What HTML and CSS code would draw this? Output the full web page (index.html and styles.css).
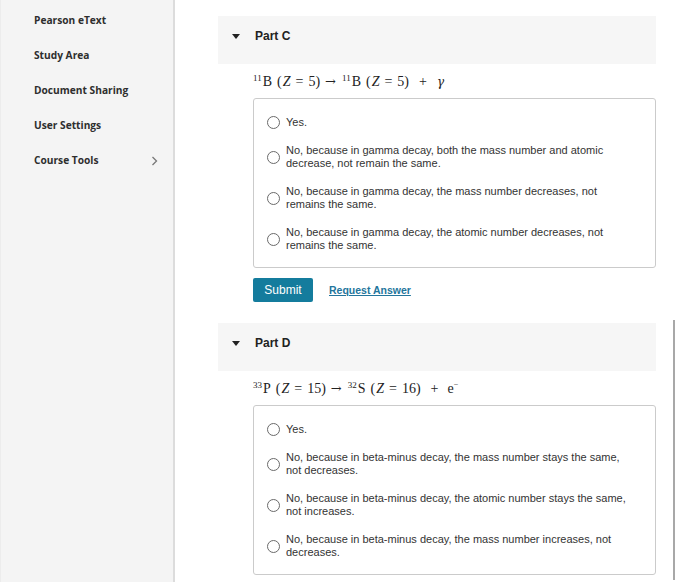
FILE: index.html
```html
<!DOCTYPE html>
<html>
<head>
<meta charset="utf-8">
<link rel="stylesheet" href="styles.css">
</head>
<body>
<div class="page">
  <nav class="sidebar">
    <div class="nav-item">Pearson eText</div>
    <div class="nav-item">Study Area</div>
    <div class="nav-item">Document Sharing</div>
    <div class="nav-item">User Settings</div>
    <div class="nav-item">Course Tools
      <svg class="chev" width="7" height="10" viewBox="0 0 7 10"><polyline points="1.5,1 5.5,5 1.5,9" fill="none" stroke="#777" stroke-width="1.3"/></svg>
    </div>
  </nav>
  <main class="main">
    <section class="part">
      <div class="part-head">
        <span class="caret"></span>
        <span class="part-title">Part C</span>
      </div>
      <div class="eq">
        <sup>11</sup>B<span class="s5"></span>(<i>Z</i><span class="rel">=</span>5)<span class="arr">→</span><sup>11</sup>B<span class="s5"></span>(<i>Z</i><span class="rel">=</span>5)<span class="bin">+</span><i class="gamma">γ</i>
      </div>
      <div class="options">
        <div class="opt"><span class="radio"></span><span class="opt-text">Yes.</span></div>
        <div class="opt"><span class="radio"></span><span class="opt-text">No, because in gamma decay, both the mass number and atomic<br>decrease, not remain the same.</span></div>
        <div class="opt"><span class="radio"></span><span class="opt-text">No, because in gamma decay, the mass number decreases, not<br>remains the same.</span></div>
        <div class="opt"><span class="radio"></span><span class="opt-text">No, because in gamma decay, the atomic number decreases, not<br>remains the same.</span></div>
      </div>
      <div class="actions">
        <button class="submit">Submit</button>
        <a class="request">Request Answer</a>
      </div>
    </section>
    <section class="part part-d">
      <div class="part-head">
        <span class="caret"></span>
        <span class="part-title">Part D</span>
      </div>
      <div class="eq">
        <sup>33</sup>P<span class="s5"></span>(<i>Z</i><span class="rel">=</span>15)<span class="arr">→</span><sup>32</sup>S<span class="s5"></span>(<i>Z</i><span class="rel">=</span>16)<span class="bin">+</span>e<sup class="minus">−</sup>
      </div>
      <div class="options">
        <div class="opt"><span class="radio"></span><span class="opt-text">Yes.</span></div>
        <div class="opt"><span class="radio"></span><span class="opt-text">No, because in beta-minus decay, the mass number stays the same,<br>not decreases.</span></div>
        <div class="opt"><span class="radio"></span><span class="opt-text">No, because in beta-minus decay, the atomic number stays the same,<br>not increases.</span></div>
        <div class="opt"><span class="radio"></span><span class="opt-text">No, because in beta-minus decay, the mass number increases, not<br>decreases.</span></div>
      </div>
    </section>
  </main>
  <div class="scrollbar"></div>
</div>
</body>
</html>
```

FILE: styles.css
```css
html, body {
  margin: 0;
  padding: 0;
  background: #fff;
}
.page {
  position: relative;
  display: flex;
  width: 700px;
  height: 582px;
  overflow: hidden;
}
.sidebar {
  width: 172px;
  flex: none;
  background: #f4f4f4;
  border-left: 1px solid #ececec;
  border-right: 2px solid #dcdcdc;
  padding-top: 3px;
  box-sizing: content-box;
}
.nav-item {
  position: relative;
  height: 35px;
  line-height: 35px;
  padding-left: 33px;
  font-family: "Open Sans", sans-serif;
  font-weight: 700;
  font-size: 10.2px;
  color: #2e2e2e;
}
.chev {
  position: absolute;
  left: 150px;
  top: 12.5px;
}
.main {
  flex: 1;
  padding-top: 16px;
  padding-left: 43px;
}
.part {
  width: 438px;
}
.part-head {
  height: 48px;
  box-sizing: border-box;
  background: #f6f6f6;
  display: flex;
  padding: 13px 0 0 14px;
  align-items: flex-start;
}
.caret {
  width: 0;
  height: 0;
  margin-top: 5px;
  border-left: 4px solid transparent;
  border-right: 4px solid transparent;
  border-top: 5px solid #222;
  margin-right: 15px;
}
.part-title {
  font-family: "Liberation Sans", Arial, sans-serif;
  font-weight: 700;
  font-size: 12px;
  line-height: 14px;
  color: #222;
}
.eq {
  margin: 10px 0 8px 35px;
  height: 16px;
  line-height: 16px;
  font-family: "Liberation Serif", "DejaVu Serif", serif;
  font-size: 14px;
  color: #222;
  white-space: nowrap;
}
.eq sup {
  font-size: 9px;
  vertical-align: 0;
  position: relative;
  top: -5px;
  margin-right: 1px;
}
.eq .minus {
  font-size: 8px;
  top: -6px;
}
.eq i {
  font-style: italic;
  margin-left: 1px;
}
.eq .gamma {
  font-family: "DejaVu Serif", serif;
  font-size: 12px;
}
.s5 { display: inline-block; width: 5px; }
.rel { margin: 0 5px; }
.arr {
  font-family: "DejaVu Serif", serif;
  font-size: 13px;
  margin: 0 6px 0 5px;
}
.bin { margin: 0 9px 0 10px; }
.options {
  margin-left: 35px;
  border: 1px solid #cbcbcb;
  border-radius: 3px;
  height: 170px;
  padding: 17px 0 0 13px;
  box-sizing: border-box;
  width: 403px;
}
.opt {
  display: flex;
  align-items: center;
  margin-bottom: 14px;
}
.radio {
  flex: none;
  width: 11px;
  height: 11px;
  border: 1.5px solid #6a6a6a;
  border-radius: 50%;
  margin-right: 6px;
}
.opt-text {
  font-family: "Liberation Sans", Arial, sans-serif;
  font-size: 11px;
  line-height: 13.5px;
  color: #333;
}
.actions {
  margin: 10px 0 0 35px;
  display: flex;
  align-items: center;
  height: 24px;
}
.submit {
  width: 60px;
  height: 24px;
  border: none;
  border-radius: 2px;
  background: #147c9d;
  color: #fff;
  font-family: "Liberation Sans", Arial, sans-serif;
  font-size: 12px;
  padding: 0;
}
.request {
  margin-left: 16px;
  font-family: "Liberation Sans", Arial, sans-serif;
  font-weight: 700;
  font-size: 10.5px;
  color: #23759c;
  text-decoration: underline;
}
.part-d {
  margin-top: 21px;
}
.scrollbar {
  position: absolute;
  left: 673px;
  top: 320px;
  width: 2px;
  height: 260px;
  background: #a8a8a8;
}
```
